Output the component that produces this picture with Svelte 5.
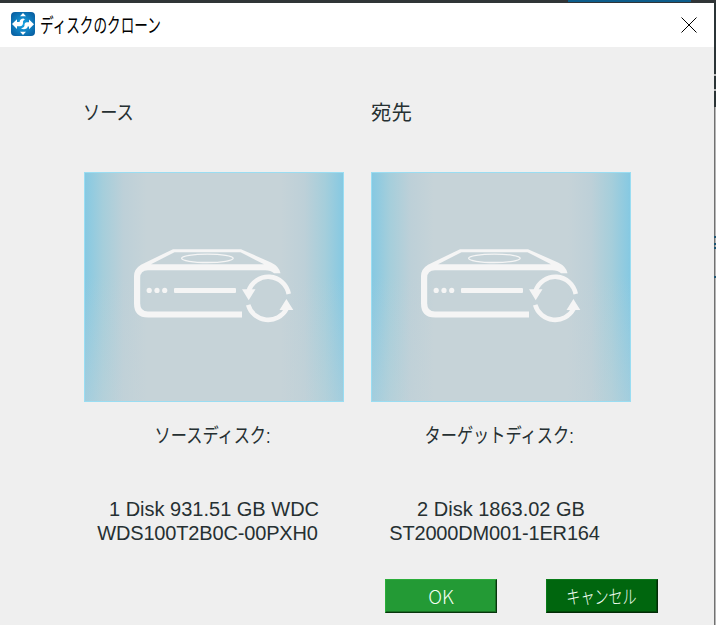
<script lang="ts">
  interface Disk {
    heading: string;
    kanji: boolean;
    label: string;
    name: string;
    model: string;
  }

  const title: string = 'ディスクのクローン';

  const disks: Disk[] = [
    {
      heading: 'ソース',
      kanji: false,
      label: 'ソースディスク:',
      name: '1 Disk 931.51 GB WDC',
      model: 'WDS100T2B0C-00PXH0',
    },
    {
      heading: '宛先',
      kanji: true,
      label: 'ターゲットディスク:',
      name: '2 Disk 1863.02 GB',
      model: 'ST2000DM001-1ER164',
    },
  ];
</script>

<div class="screen">
  <div class="strip"><span></span></div>

  <div class="row">
    <main>
      <header>
        <svg class="logo" viewBox="0 0 24 24">
          <defs>
            <radialGradient id="logo-bg" cx="50%" cy="50%" r="65%">
              <stop offset="0" stop-color="#19a5e4" />
              <stop offset="1" stop-color="#075c9f" />
            </radialGradient>
          </defs>
          <rect width="24" height="24" rx="4" fill="url(#logo-bg)" />
          <g fill="#fff">
            <path d="M12 1 15 4.200H9zM12 23 9 19.800h6z" />
            <path d="M1 12 6 7.200V10H8.500Q9 7 12.500 6.600L14 7.500Q11.500 8.500 12 11Q12 14 9 14.200H6V17z" />
            <path d="M23 12.300 18 7.500V10.200H15.500Q13.500 10.500 13.500 12.500Q14 15.500 10 16.200Q12.500 18 15 16.800Q16.500 16 16.700 14.400H18V17.200z" />
          </g>
        </svg>
        <h1><span>{title}</span></h1>
        <button class="close" aria-label="閉じる">
          <svg viewBox="0 0 16 16"><path d="M.5.5l15 15M15.5.5l-15 15" /></svg>
        </button>
      </header>

      <div class="disks">
        {#each disks as disk}
          <section>
            <h2 class:kanji={disk.kanji}><span>{disk.heading}</span></h2>

            <div class="panel">
              <svg viewBox="0 0 160 76">
                <path
                  fill="#f5f5f5"
                  fill-rule="evenodd"
                  d="M108 68.500H14Q0 68.500 0 54.500V27Q0 20 7 15.700L39 .2H107L137 13.500Q145.300 17.500 146.500 24.200H140Q137 21.300 131 21.300H14Q6.200 21.300 6.200 29V54.500Q6.200 62.400 14 62.400H108ZM40.500 3.200 17 15.300H130L106.500 3.200Z"
                />
                <ellipse cx="73.400" cy="9.300" rx="25.800" ry="4.200" class="line thin" />
                <circle cx="15.200" cy="41.400" r="2.600" fill="#f5f5f5" />
                <circle cx="23" cy="41.400" r="2.600" fill="#f5f5f5" />
                <circle cx="30.700" cy="41.400" r="2.600" fill="#f5f5f5" />
                <rect x="40" y="39" width="62" height="5" rx="1" fill="#f5f5f5" />
                <path class="line" d="M114.500 42A20.800 20.800 0 0 1 154.700 45M114.200 55.800A20.800 20.800 0 0 0 152.500 60" />
                <path fill="#f5f5f5" d="M108 40.300H121.500L114.700 51.300ZM145.500 61H159.300L152.400 50Z" />
              </svg>
            </div>

            <h3><span>{disk.label}</span></h3>

            <p>
              <span class="name">{disk.name}</span>
              <span class="model">{disk.model}</span>
            </p>
          </section>
        {/each}
      </div>

      <footer>
        <button class="ok"><span>OK</span></button>
        <button class="cancel"><span>キャンセル</span></button>
      </footer>
    </main>

    <aside></aside>
  </div>
</div>

<style>
  :global(body) {
    overflow: hidden;
  }

  .screen {
    width: 716px;
    height: 625px;
    font-family: "Liberation Sans", "Noto Sans CJK JP", sans-serif;
    color: #263032;
    background: #efefef;
  }

  .strip {
    height: 3px;
    background: #303537;
  }

  .strip span {
    display: block;
    width: 123px;
    height: 2px;
    margin-left: 568px;
    background: #0c5d8b;
  }

  .row {
    display: flex;
    height: 622px;
  }

  main {
    width: 714px;
  }

  /* Sliver of the window behind the dialog */
  aside {
    width: 2px;
    background:
      linear-gradient(#b8b8b8 0 0) 0 71px / 2px 2px no-repeat,
      linear-gradient(#b8b8b8 0 0) 0 86px / 2px 2px no-repeat,
      linear-gradient(#1d5573 0 0) 0 233px / 2px 2px no-repeat,
      linear-gradient(#1d5573 0 0) 0 240px / 2px 2px no-repeat,
      linear-gradient(#1d5573 0 0) 0 244px / 2px 2px no-repeat,
      linear-gradient(#1d5573 0 0) 0 273px / 2px 2px no-repeat,
      linear-gradient(#b5b5b5 0 0) 1px 104px / 1px 518px no-repeat,
      linear-gradient(#2b3436 0 104px, #717171 104px);
  }

  header {
    display: flex;
    align-items: center;
    height: 44px;
    padding-left: 11px;
    box-sizing: border-box;
    background: #fff;
  }

  .logo {
    width: 24px;
    height: 24px;
    margin-top: -2px;
  }

  h1,
  h2,
  h3 {
    margin: 0;
    font-weight: 400;
    white-space: nowrap;
  }

  h1 {
    width: 200px;
    margin-left: 5px;
    padding-top: 3px;
    font-size: 20px;
    line-height: 41px;
    color: #000;
  }

  h1 span,
  h2 span,
  h3 span,
  button span {
    display: inline-block;
  }

  h1 span {
    transform: scaleX(.68);
    transform-origin: left;
  }

  .close {
    width: 17px;
    height: 17px;
    margin: 0 16px 0 auto;
    padding: 0;
    border: none;
    background: none;
  }

  .close svg {
    display: block;
    width: 16px;
    height: 16px;
  }

  .close path {
    stroke: #000;
    stroke-width: 1;
  }

  .disks {
    display: flex;
    gap: 27px;
    padding: 50px 0 0 84px;
  }

  section {
    width: 260px;
  }

  h2 {
    height: 75px;
    font-size: 20px;
    line-height: 32px;
  }

  h2 span {
    transform: scaleX(.86);
    transform-origin: left;
    margin-left: -1px;
  }

  h2.kanji span {
    margin-left: 0;
    transform: scaleX(1.02);
  }

  .panel {
    display: flex;
    height: 230px;
    box-sizing: border-box;
    padding: 76px 0 0 49px;
    border: 1px solid #9addf2;
    background:
      linear-gradient(#c6d3d800, #c6d3d800 45%, #c6d3d870),
      linear-gradient(90deg, #86c9e2, #a5cedb 7%, #bdd0d8 15%, #c6d3d8 24%, #c6d3d8 76%, #bdd0d8 85%, #a5cedb 93%, #86c9e2);
  }

  .panel svg {
    width: 160px;
    height: 76px;
  }

  .line {
    fill: none;
    stroke: #f5f5f5;
    stroke-width: 4.6;
  }

  .thin {
    stroke-width: 1.3;
  }

  h3 {
    height: 95px;
    padding-top: 18px;
    box-sizing: border-box;
    font-size: 20px;
    line-height: 32px;
    text-align: center;
  }

  h3 span {
    margin-left: -3px;
    transform: scaleX(.81);
  }

  p {
    display: flex;
    flex-direction: column;
    align-items: center;
    margin: 0;
    padding-right: 13px;
    font-size: 20px;
    line-height: 24px;
    white-space: nowrap;
  }

  .name {
    padding-left: 13px;
  }

  .model {
    letter-spacing: -.16px;
  }

  footer {
    display: flex;
    gap: 49px;
    padding: 34px 0 0 385px;
  }

  footer button {
    width: 112px;
    height: 34px;
    padding: 0;
    border: 1px solid;
    font: 300 19px/28px "Noto Sans CJK JP", sans-serif;
    color: #f4fff4;
  }

  .ok {
    background: #239a35;
    border-color: #2bae3a #08350d #08350d #2bae3a !important;
    box-shadow: inset -1px -1px #177022;
  }

  .ok span {
    margin-top: -2px;
  }

  .cancel {
    background: #00660e;
    border-color: #087b18 #032b07 #032b07 #087b18 !important;
    box-shadow: inset -1px -1px #004808;
  }

  .cancel span {
    margin: -1px -20px 0;
    transform: scaleX(.74);
  }
</style>
